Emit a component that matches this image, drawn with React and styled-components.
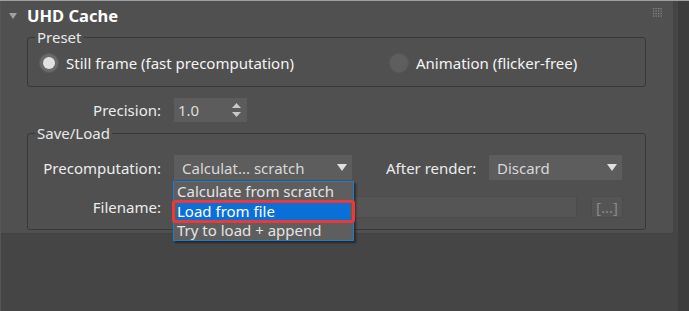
import React from "react";
import styled, { createGlobalStyle } from "styled-components";

const Global = createGlobalStyle`
  html, body { margin: 0; padding: 0; background: #454545; }
  body { font-family: "Noto Sans", "Open Sans", sans-serif; font-size: 15px; color: #e8e8e8; }
  * { box-sizing: border-box; }
`;

const Page = styled.div`
  display: flex;
  width: 689px;
  height: 311px;
  border-top: 1px solid #a0a0a0;
  overflow: hidden;
`;

const Main = styled.div`
  flex: 1;
  background: #454545;
  border-left: 1px solid #555;
`;

const Scrollbar = styled.div`
  width: 11px;
  background: #3c3c3c;
`;

const Rollout = styled.div`
  position: relative;
  width: 673px;
  height: 233px;
  background: #505050;
  border-right: 1px solid #424242;
  border-bottom: 1px solid #424242;
  border-bottom-right-radius: 3px;
  padding-left: 26px;
`;

const Header = styled.div`
  display: flex;
  align-items: center;
  height: 29px;
  margin-left: -18px;
  gap: 10px;
`;

const Title = styled.span`
  font-weight: 700;
  font-size: 16.5px;
  color: #ffffff;
`;

const Grip = styled.svg`
  position: absolute;
  top: 7px;
  right: 10px;
`;

const Group = styled.fieldset`
  margin: ${(p) => p.$mt || 0}px 0 0 0;
  width: 619px;
  border: 1px solid #383838;
  border-radius: 3px;
  padding: 0;
  height: ${(p) => p.$h}px;
  min-width: 0;
`;

const Legend = styled.legend`
  padding: 0 2px;
  margin-left: 7px;
  line-height: 15px;
  color: #e8e8e8;
`;

const RadioRow = styled.div`
  display: flex;
  align-items: center;
  height: 36px;
  padding-left: 11px;
`;

const RadioOpt = styled.label`
  display: flex;
  align-items: center;
  gap: 7px;
  color: #f4f4f4;
  width: ${(p) => p.$w}px;
`;

const RadioDot = styled.span`
  width: 20px;
  height: 20px;
  border-radius: 50%;
  background: ${(p) => (p.$on ? "#6a6a6a" : "#5e5e5e")};
  border: 1px solid ${(p) => (p.$on ? "#5c5c5c" : "#585858")};
  display: flex;
  align-items: center;
  justify-content: center;
  &::after {
    content: "";
    width: 12px;
    height: 12px;
    border-radius: 50%;
    background: #e2e2e2;
    display: ${(p) => (p.$on ? "block" : "none")};
  }
`;

const FieldRow = styled.div`
  display: flex;
  align-items: center;
  height: ${(p) => p.$h}px;
  margin-top: ${(p) => p.$mt || 0}px;
`;

const Label = styled.span`
  width: ${(p) => p.$w}px;
  text-align: ${(p) => (p.$left ? "left" : "right")};
  margin-right: 13px;
  color: #ececec;
  white-space: nowrap;
  flex-shrink: 0;
`;

const Spinner = styled.div`
  display: flex;
  align-items: center;
  justify-content: space-between;
  width: 73px;
  height: 24px;
  background: #5c5c5c;
  padding: 0 6px 0 4px;
  color: #dcdcdc;
`;

const Select = styled.div`
  display: flex;
  align-items: center;
  justify-content: space-between;
  width: ${(p) => p.$w}px;
  height: 25px;
  background: #5d5d5d;
  padding: 0 5px 0 8px;
  color: #d8d8d8;
  flex-shrink: 0;
  white-space: nowrap;
`;

const Input = styled.div`
  width: 403px;
  height: 22px;
  background: #555555;
  border: 1px solid #4c4c4c;
`;

const DotsButton = styled.div`
  margin-left: 14px;
  width: 32px;
  height: 22px;
  background: #555555;
  border: 1px solid #4c4c4c;
  border-radius: 3px;
  color: #8a8a8a;
  display: flex;
  align-items: center;
  justify-content: center;
`;

const Spacer = styled.div`
  width: ${(p) => p.$w}px;
`;

const List = styled.div`
  position: absolute;
  left: 172px;
  top: 180px;
  width: 181px;
  background: #5e5e5e;
  border: 1px solid #1f7ad6;
  box-shadow: 2px 2px 2px rgba(0, 0, 0, 0.45);
  padding: 0 1px;
  z-index: 2;
`;

const Item = styled.div`
  position: relative;
  height: ${(p) => (p.$sel ? 17 : 19.5)}px;
  line-height: ${(p) => (p.$sel ? 17 : 19)}px;
  padding-left: ${(p) => (p.$sel ? 0 : 2)}px;
  margin: ${(p) => (p.$sel ? "1px 2px" : "0")};
  background: ${(p) => (p.$sel ? "#0a6fd6" : "transparent")};
  color: ${(p) => (p.$sel ? "#ffffff" : "#e4e4e4")};
  white-space: nowrap;
`;

const Highlight = styled.div`
  position: absolute;
  left: -5px;
  right: -5px;
  top: -3px;
  bottom: -3px;
  border: 3px solid #e8393b;
  border-radius: 3px;
`;

const Tri = () => (
  <svg width={10} height={7} viewBox="0 0 10 7">
    <path d="M0 0 L10 0 L5 7 Z" fill="#e0e0e0" />
  </svg>
);

export default function App() {
  const dots = [];
  for (let r = 0; r < 4; r++)
    for (let c = 0; c < 4; c++)
      dots.push(<rect key={r + "-" + c} x={c * 2.5} y={r * 2.5} width="1.2" height="1.2" fill="#8c8c8c" />);
  return (
    <>
      <Global />
      <Page>
        <Main>
          <Rollout>
            <Header>
              <svg width="8" height="6" viewBox="0 0 8 6">
                <path d="M0 0 L8 0 L4 6 Z" fill="#a0a0a0" />
              </svg>
              <Title>UHD Cache</Title>
            </Header>
            <Grip width="10" height="10" viewBox="0 0 10 10">{dots}</Grip>
            <Group $h={57}>
              <Legend>Preset</Legend>
              <RadioRow>
                <RadioOpt $w={350}>
                  <RadioDot $on />
                  Still frame (fast precomputation)
                </RadioOpt>
                <RadioOpt>
                  <RadioDot />
                  Animation (flicker-free)
                </RadioOpt>
              </RadioRow>
            </Group>
            <FieldRow $h={24} $mt={11}>
              <Label $w={134}>Precision:</Label>
              <Spinner>
                1.0
                <svg width="9" height="16" viewBox="0 0 9 16">
                  <path d="M0 6 L9 6 L4.5 1 Z" fill="#c8c8c8" />
                  <path d="M0 10 L9 10 L4.5 15 Z" fill="#c8c8c8" />
                </svg>
              </Spinner>
            </FieldRow>
            <Group $h={104} $mt={4}>
              <Legend>Save/Load</Legend>
              <FieldRow $h={25} $mt={14}>
                <Label $w={133}>Precomputation:</Label>
                <Select $w={178}>
                  Calculat... scratch
                  <Tri />
                </Select>
                <Spacer $w={34} />
                <Label $w={90} $left>After render:</Label>
                <Select $w={133}>
                  Discard
                  <Tri />
                </Select>
              </FieldRow>
              <FieldRow $h={22} $mt={16}>
                <Label $w={133}>Filename:</Label>
                <Input />
                <DotsButton>[...]</DotsButton>
              </FieldRow>
            </Group>
            <List>
              <Item>Calculate from scratch</Item>
              <Item $sel>
                Load from file
                <Highlight />
              </Item>
              <Item>Try to load + append</Item>
            </List>
          </Rollout>
        </Main>
        <Scrollbar />
      </Page>
    </>
  );
}
